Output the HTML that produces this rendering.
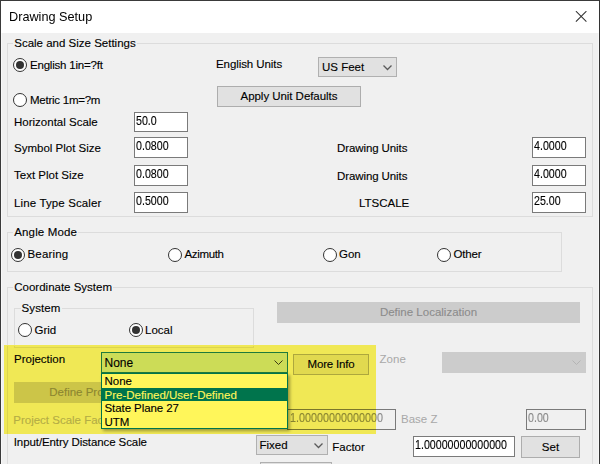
<!DOCTYPE html>
<html>
<head>
<meta charset="utf-8">
<title>Drawing Setup</title>
<style>
*{box-sizing:border-box;margin:0;padding:0}
html,body{width:600px;height:464px;overflow:hidden;background:#f0f0f0}
body{font-family:"Liberation Sans",sans-serif;font-size:11.5px;color:#000;position:relative;-webkit-text-stroke:.12px}
.abs{position:absolute}
#win{position:absolute;left:0;top:0;width:600px;height:464px;background:#f0f0f0;overflow:hidden}
#bt{position:absolute;left:0;top:0;width:600px;height:1px;background:#3a3a3a}
#bl{position:absolute;left:0;top:0;width:1px;height:464px;background:#3a3a3a}
#br{position:absolute;left:599px;top:0;width:1px;height:464px;background:#333}
#title{position:absolute;left:1px;top:1px;width:598px;height:32px;background:#fff}
#title span{position:absolute;left:8px;top:8px;-webkit-text-stroke:0;font-size:13.5px;color:#000;transform:scaleX(.94);transform-origin:0 0;white-space:nowrap}
.grp{position:absolute;border:1px solid #dcdcdc}
.grp>.lg{position:absolute;left:5.25px;top:-8px;background:#f0f0f0;padding:0 1px;font-size:11.5px;line-height:15px;white-space:nowrap}
.t{position:absolute;font-size:11.5px;line-height:15px;white-space:nowrap}
.g{color:#a8a8a8;-webkit-text-stroke:0}
.in{position:absolute;background:#fff;border:1px solid #7a7a7a;height:21px;white-space:nowrap;overflow:hidden}
.in span{position:absolute;left:1px;top:1.3px;font-size:12.2px;line-height:15px;transform:scaleX(.875);transform-origin:0 50%;white-space:nowrap}
.in.dis{background:#f0f0f0;border-color:#7a7a7a;color:#8a8a8a}
.btn{position:absolute;background:#e1e1e1;border:1px solid #adadad;font-size:11.5px;text-align:center;white-space:nowrap;overflow:hidden}
.btn.dis{background:#cccccc;border-color:#cccccc;color:#8c8c8c}
.sel{position:absolute;background:#e1e1e1;border:1px solid #b0b0b0;font-size:11.5px;white-space:nowrap;overflow:hidden}
.sel span{position:absolute;left:3px;top:1.5px;line-height:15px}
.sel svg{position:absolute;right:4.5px;top:6.5px}
.rad{position:absolute;width:14px;height:14px;border-radius:50%;border:1px solid #333;background:#fff}
.rad.on::after{content:"";position:absolute;left:2px;top:2px;width:8px;height:8px;border-radius:50%;background:#333}
#hl{position:absolute;left:4px;top:345.3px;width:372px;height:89px;background:#f0e855;filter:blur(.55px)}
.iso{position:absolute;isolation:isolate;background:#f0f0f0;overflow:hidden}
.iso .ov{position:absolute;left:0;top:0;height:100%;background:#fff65a;mix-blend-mode:multiply}
.li{position:absolute;left:1px;width:185px;height:14px;line-height:14px;padding-left:1.5px;font-size:11.5px;white-space:nowrap}
</style>
</head>
<body>
<div id="win">
  <div id="title"><span>Drawing Setup</span>
    <svg class="abs" style="left:574px;top:10px" width="13" height="12" viewBox="0 0 13 12"><path d="M0.9 0.2 L11.4 10.7 M11.4 0.2 L0.9 10.7" stroke="#333" stroke-width="1.1" fill="none"/></svg>
  </div>
  <div class="abs" style="left:1px;top:33px;width:1px;height:431px;background:#f8f8f8"></div><div class="abs" style="left:598px;top:33px;width:1px;height:431px;background:#f8f8f8"></div>
  <div id="bt"></div><div id="bl"></div><div id="br"></div>

  <!-- Scale and Size Settings -->
  <div class="grp" style="left:7px;top:43px;width:586px;height:174px"><div class="lg">Scale and Size Settings</div></div>
  <div class="rad on" style="left:13.25px;top:58px"></div><div class="t" style="left:30px;top:58.2px;letter-spacing:-.2px">English 1in=?ft</div>
  <div class="t" style="left:216px;top:56.6px;letter-spacing:-.08px">English Units</div>
  <div class="sel" style="left:318px;top:57px;width:79px;height:20px"><span>US Feet</span><svg width="9" height="6" viewBox="0 0 9 6"><path d="M0.5 0.5 L4.5 4.5 L8.5 0.5" stroke="#5a5a5a" stroke-width="1.25" fill="none"/></svg></div>
  <div class="rad" style="left:13.25px;top:93px"></div><div class="t" style="left:30px;top:93px;letter-spacing:-.25px">Metric 1m=?m</div>
  <div class="btn" style="left:217px;top:86px;width:144px;height:21px;line-height:19px;letter-spacing:-.05px">Apply Unit Defaults</div>

  <div class="t" style="left:14px;top:115px">Horizontal Scale</div>
  <div class="in" style="left:134px;top:112px;width:54px;height:20px"><span>50.0</span></div>
  <div class="t" style="left:14px;top:141px">Symbol Plot Size</div>
  <div class="in" style="left:134px;top:137px;width:54px"><span>0.0800</span></div>
  <div class="t" style="left:14px;top:168px">Text Plot Size</div>
  <div class="in" style="left:134px;top:165px;width:54px"><span>0.0800</span></div>
  <div class="t" style="left:14px;top:196px;letter-spacing:.13px">Line Type Scaler</div>
  <div class="in" style="left:134px;top:192px;width:54px"><span>0.5000</span></div>

  <div class="t" style="left:337px;top:141px;letter-spacing:-.1px">Drawing Units</div>
  <div class="in" style="left:532px;top:137px;width:54px"><span>4.0000</span></div>
  <div class="t" style="left:337px;top:168.5px;letter-spacing:-.1px">Drawing Units</div>
  <div class="in" style="left:532px;top:165px;width:54px"><span>4.0000</span></div>
  <div class="t" style="left:359px;top:195.5px">LTSCALE</div>
  <div class="in" style="left:532px;top:192px;width:54px"><span>25.00</span></div>

  <!-- Angle Mode -->
  <div class="grp" style="left:7px;top:232px;width:555px;height:40px"><div class="lg" style="letter-spacing:.15px">Angle Mode</div></div>
  <div class="rad on" style="left:11px;top:248px"></div><div class="t" style="left:27.5px;top:247px;letter-spacing:.18px">Bearing</div>
  <div class="rad" style="left:168px;top:248px"></div><div class="t" style="left:184.5px;top:247px;letter-spacing:-.35px">Azimuth</div>
  <div class="rad" style="left:322.5px;top:248px"></div><div class="t" style="left:339px;top:247px">Gon</div>
  <div class="rad" style="left:436.5px;top:248px"></div><div class="t" style="left:453.5px;top:247px;letter-spacing:-.2px">Other</div>

  <!-- Coordinate System -->
  <div class="grp" style="left:7px;top:287px;width:586px;height:200px"><div class="lg">Coordinate System</div></div>
  <div class="grp" style="left:14px;top:308px;width:240px;height:40px"><div class="lg" style="left:5.5px;letter-spacing:.12px">System</div></div>
  <div id="hl"></div>
  <div class="abs" style="left:7px;top:346px;width:1px;height:88px;background:#dcd44e"></div>
  <div class="abs" style="left:14px;top:347px;width:240px;height:1px;background:#dcd44e"></div>
  <div class="abs" style="left:14px;top:346px;width:1px;height:1px;background:#dcd44e"></div>
  <div class="abs" style="left:253px;top:346px;width:1px;height:1px;background:#dcd44e"></div>
  <div class="rad" style="left:18px;top:323px"></div><div class="t" style="left:34.5px;top:323px">Grid</div>
  <div class="rad on" style="left:128.5px;top:323px"></div><div class="t" style="left:145px;top:323px">Local</div>
  <div class="btn dis" style="left:277px;top:302px;width:303px;height:21px;line-height:19px">Define Localization</div>

  <div class="t" style="left:14px;top:352px">Projection</div>
  <div class="sel" style="left:101px;top:352px;width:187px;height:21px;background:#ccdc57;border-color:#1f7a3c"><span style="left:2.5px;top:2.5px;font-size:12px">None</span><svg style="top:7px" width="9" height="6" viewBox="0 0 9 6"><path d="M0.5 0.5 L4.5 4.5 L8.5 0.5" stroke="#3c3a15" stroke-width="1" fill="none"/></svg></div>
  <div class="btn" style="left:293px;top:354px;width:76px;height:21px;line-height:19px;letter-spacing:-.2px;background:#e1d94f;border-color:#ada73d">More Info</div>
  <div class="t g" style="left:379.5px;top:352px;letter-spacing:.1px">Zone</div>
  <div class="sel" style="left:442px;top:352px;width:144px;height:21px;background:#cccccc;border-color:#cccccc"><svg width="9" height="6" viewBox="0 0 9 6"><path d="M0.5 0.5 L4.5 4.5 L8.5 0.5" stroke="#b4b4b4" fill="none"/></svg></div>

  <div class="btn dis" style="left:14px;top:382px;width:162px;height:21px;line-height:19px;text-align:left;padding-left:34.25px;background:#ccc548;border-color:#ccc548;color:#8c8731">Define Projection</div>
  <div class="t" style="left:13.25px;top:412.5px;color:#b4ad45">Project Scale Factor</div>
  <div class="iso" style="left:287px;top:409px;width:109px;height:21px"><div class="in dis" style="left:0;top:0;width:109px"><span style="left:1.75px;transform:scaleX(.885)">1.00000000000000</span></div><div class="ov" style="width:89px"></div></div>
  <div class="t g" style="left:401px;top:412px">Base Z</div>
  <div class="in dis" style="left:526px;top:409px;width:60px"><span>0.00</span></div>

  <!-- dropdown list -->
  <div class="abs" style="left:101px;top:373px;width:187px;height:56px;background:#fff65a;border:1px solid #00744c;box-shadow:2px 2px 3px rgba(0,0,0,.35)">
    <div class="abs" style="left:0;top:14px;width:185px;height:13px;background:#00744c"></div>
    <div class="li" style="top:-.5px">None</div>
    <div class="li" style="top:14px;color:#fff65a">Pre-Defined/User-Defined</div>
    <div class="li" style="top:27.25px;letter-spacing:-.08px">State Plane 27</div>
    <div class="li" style="top:40.6px">UTM</div>
  </div>

  <div class="t" style="left:13.75px;top:435px;letter-spacing:-.09px">Input/Entry Distance Scale</div>
  <div class="sel" style="left:256px;top:435px;width:72px;height:20px"><span style="left:2.5px">Fixed</span><svg width="9" height="6" viewBox="0 0 9 6"><path d="M0.5 0.5 L4.5 4.5 L8.5 0.5" stroke="#5a5a5a" stroke-width="1.25" fill="none"/></svg></div>
  <div class="t" style="left:332.25px;top:440px">Factor</div>
  <div class="in" style="left:413px;top:436px;width:102px;height:21px"><span>1.00000000000000</span></div>
  <div class="btn" style="left:521px;top:436px;width:59px;height:22px;line-height:20px">Set</div>
  <div class="sel" style="left:260px;top:462px;width:72px;height:23px"></div>

</div>
</body>
</html>
